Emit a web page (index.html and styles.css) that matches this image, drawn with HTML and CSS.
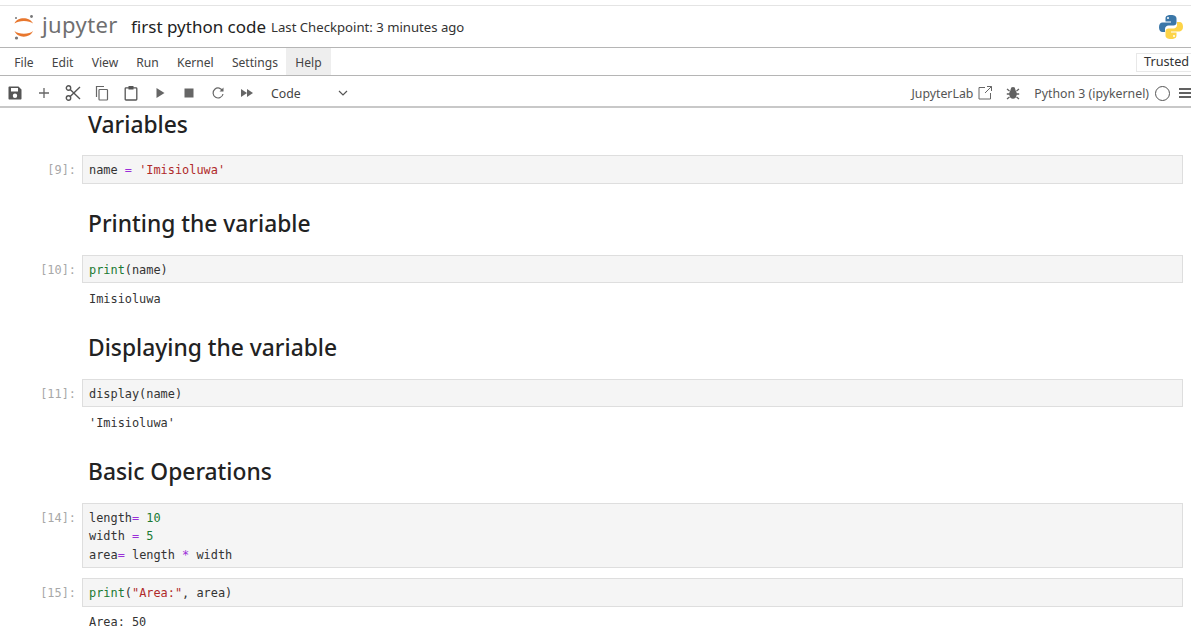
FILE: index.html
```html
<!DOCTYPE html>
<html lang="en">
<head>
<meta charset="utf-8">
<title>first python code - Jupyter Notebook</title>
<link rel="stylesheet" href="styles.css">
</head>
<body>
<header class="topbar">
  <div class="logo">
    <svg class="logo-mark" width="24" height="30" viewBox="0 0 24 30">
      <path d="M2.5 11.5C5 4.5 18 4.5 21 11.5C17.5 8 6.5 8 2.5 11.5Z" fill="#e8772e"/>
      <path d="M2.5 19C5.5 26.5 18 26.5 21 19C17.5 22.5 6.5 22.5 2.5 19Z" fill="#e8772e"/>
      <circle cx="19.5" cy="4.5" r="1.4" fill="#767677"/>
      <circle cx="4" cy="6" r="1" fill="#767677"/>
      <circle cx="4.5" cy="26" r="1.6" fill="#767677"/>
    </svg>
    <span class="logo-text">jupyter</span>
  </div>
  <span class="nb-title">first python code</span>
  <span class="checkpoint">Last Checkpoint: 3 minutes ago</span>
  <svg class="py-logo" width="26" height="26" viewBox="0 0 26 26">
    <path d="M12.8 1C8.5 1 7.5 2.7 7.5 4.5V7.5H13V8.5H4.5C2.3 8.5 1 10.5 1 13.2C1 16 2.3 18 4.5 18H7V15C7 13 8.7 11.5 10.5 11.5H15.5C17.2 11.5 18.5 10.2 18.5 8.5V4.5C18.5 2.5 16.8 1 12.8 1Z" fill="#3b77a8"/>
    <path d="M13.2 25C17.5 25 18.5 23.3 18.5 21.5V18.5H13V17.5H21.5C23.7 17.5 25 15.5 25 12.8C25 10 23.7 8 21.5 8H19V11C19 13 17.3 14.5 15.5 14.5H10.5C8.8 14.5 7.5 15.8 7.5 17.5V21.5C7.5 23.5 9.2 25 13.2 25Z" fill="#fdd448"/>
    <circle cx="10" cy="4" r="1" fill="#fff"/>
    <circle cx="16" cy="22" r="1" fill="#fff"/>
  </svg>
</header>
<nav class="menubar">
  <span class="menu-item">File</span>
  <span class="menu-item">Edit</span>
  <span class="menu-item">View</span>
  <span class="menu-item">Run</span>
  <span class="menu-item">Kernel</span>
  <span class="menu-item">Settings</span>
  <span class="menu-item active">Help</span>
  <span class="trusted">Trusted</span>
</nav>
<div class="toolbar">
  <svg class="tool" width="16" height="16" viewBox="0 0 16 16"><path d="M2.5 1.5H11.5L14.5 4.5V13.5C14.5 14.1 14.1 14.5 13.5 14.5H2.5C1.9 14.5 1.5 14.1 1.5 13.5V2.5C1.5 1.9 1.9 1.5 2.5 1.5ZM4 3V6.5H11V3ZM8 8.5A2.2 2.2 0 1 0 8 12.9A2.2 2.2 0 1 0 8 8.5Z" fill="#555" fill-rule="evenodd"/></svg>
  <svg class="tool" width="16" height="16" viewBox="0 0 16 16"><path d="M8 3V13M3 8H13" stroke="#666" stroke-width="1.3" fill="none"/></svg>
  <svg class="tool" width="16" height="16" viewBox="0 0 16 16"><g stroke="#555" stroke-width="1.4" fill="none"><circle cx="3.5" cy="3" r="2.2"/><circle cx="3.5" cy="13" r="2.2"/><path d="M5.2 4.5L15 14M5.2 11.5L15 2"/></g></svg>
  <svg class="tool" width="16" height="16" viewBox="0 0 16 16"><g stroke="#666" stroke-width="1.2" fill="none"><rect x="5" y="4.5" width="8.5" height="10.5" rx=".8"/><path d="M2.5 12V1.5H10"/></g></svg>
  <svg class="tool" width="16" height="16" viewBox="0 0 16 16"><rect x="2.2" y="2.8" width="11.6" height="12.2" rx=".8" stroke="#555" stroke-width="1.3" fill="none"/><rect x="5.5" y="1" width="5" height="3.5" fill="#555"/></svg>
  <svg class="tool" width="16" height="16" viewBox="0 0 16 16"><path d="M4.5 3L12.5 8L4.5 13Z" fill="#666"/></svg>
  <svg class="tool" width="16" height="16" viewBox="0 0 16 16"><rect x="3.5" y="3.5" width="9" height="9" fill="#666"/></svg>
  <svg class="tool" width="16" height="16" viewBox="0 0 16 16"><path d="M12.7 6A5 5 0 1 0 13 9" stroke="#666" stroke-width="1.2" fill="none"/><path d="M13.5 2.5V6.5H9.5Z" fill="#666"/></svg>
  <svg class="tool" width="16" height="16" viewBox="0 0 16 16"><path d="M2 4L8 8L2 12ZM8 4L14 8L8 12Z" fill="#666"/></svg>
  <span class="cell-type">Code
    <svg width="12" height="12" viewBox="0 0 12 12"><path d="M2 4L6 8L10 4" stroke="#555" stroke-width="1.2" fill="none"/></svg>
  </span>
  <span class="spacer"></span>
  <span class="lab-link">JupyterLab</span>
  <svg class="ext" width="16" height="16" viewBox="0 0 16 16"><path d="M8 2.5H2V14H13.5V8M10 1.5H14.5V6M14.5 1.5L8 8" stroke="#666" stroke-width="1" fill="none"/></svg>
  <svg class="bug" width="14" height="14" viewBox="0 0 14 14"><ellipse cx="7" cy="8" rx="3.8" ry="4.8" fill="#616161"/><circle cx="7" cy="3.2" r="2.3" fill="#616161"/><path d="M1 3L3.5 5M13 3L10.5 5M0.8 8H13.2M1 13L3.5 11M13 13L10.5 11" stroke="#616161" stroke-width="1.3"/></svg>
  <span class="kernel">Python 3 (ipykernel)</span>
  <span class="kernel-status"></span>
  <svg class="hamburger" width="12" height="12" viewBox="0 0 12 12"><path d="M0 1H12V3H0ZM0 5H12V7H0ZM0 9H12V11H0Z" fill="#616161"/></svg>
</div>
<main class="notebook">
  <h2 class="md first">Variables</h2>
  <div class="cell"><span class="prompt">[9]:</span><pre class="code"><span>name </span><span class="op">=</span> <span class="str">'Imisioluwa'</span></pre></div>
  <h2 class="md">Printing the variable</h2>
  <div class="cell"><span class="prompt">[10]:</span><pre class="code"><span class="bi">print</span>(name)</pre></div>
  <pre class="output">Imisioluwa</pre>
  <h2 class="md">Displaying the variable</h2>
  <div class="cell"><span class="prompt">[11]:</span><pre class="code">display(name)</pre></div>
  <pre class="output">'Imisioluwa'</pre>
  <h2 class="md">Basic Operations</h2>
  <div class="cell"><span class="prompt">[14]:</span><pre class="code">length<span class="op">=</span> <span class="num">10</span>
width <span class="op">=</span> <span class="num">5</span>
area<span class="op">=</span> length <span class="op">*</span> width</pre></div>
  <div class="cell next"><span class="prompt">[15]:</span><pre class="code"><span class="bi">print</span>(<span class="str">"Area:"</span>, area)</pre></div>
  <pre class="output">Area: 50</pre>
</main>
</body>
</html>
```
FILE: styles.css
```css
* { box-sizing: border-box; }
html, body { margin: 0; padding: 0; height: 100%; overflow: hidden; background: #fff; }
body { font-family: "Noto Sans", sans-serif; color: #333; }

.topbar {
  display: flex; align-items: center; height: 43px; margin-top: 5px;
  border-top: 1px solid #e4e4e4; border-bottom: 1px solid #b5b5b5;
  padding: 0 7px 0 12px;
}
.logo { display: flex; align-items: center; width: 119px; }
.logo-mark { flex: none; }
.logo-text { font-size: 22px; color: #6f6f70; margin-left: 6px; letter-spacing: 0.4px; position: relative; top: -3px; }
.nb-title { font-size: 17px; color: #222; }
.checkpoint { font-size: 13.15px; color: #333; margin-left: 5px; }
.py-logo { margin-left: auto; }

.menubar {
  display: flex; align-items: center; height: 28px;
  border-bottom: 1px solid #b5b5b5; padding: 0 0 0 7px;
  font-size: 12.1px; color: #444;
}
.menu-item { display: flex; align-items: center; height: 100%; padding: 1px 7.3px 0; margin-right: 3.6px; }
.menu-item.active { background: #eee; padding: 1px 9.5px 0; margin-left: -3px; }
.trusted {
  margin-left: auto; align-self: flex-start; margin-top: 5px; height: 19px; width: 55px; padding-left: 7px;
  border: 1px solid #e8e8e8; border-right: 0; font-size: 12.7px; color: #333; line-height: 14px; white-space: nowrap;
}

.toolbar {
  display: flex; align-items: center; height: 32px;
  border-bottom: 2px solid #c8c8c8; padding: 4px 0 0 7px;
  font-size: 12.3px; color: #555;
}
.tool { flex: none; margin-right: 13px; }
.cell-type { display: flex; align-items: center; justify-content: space-between; width: 78px; margin-left: 3px; color: #444; }
.spacer { flex: 1; }
.ext { margin-left: 4px; }
.bug { margin-left: 13px; }
.kernel { margin-left: 14px; }
.kernel-status { width: 15px; height: 15px; border: 1.3px solid #555; border-radius: 50%; margin-left: 6px; }
.hamburger { margin-left: 9px; margin-right: 0; }

.notebook { padding: 0 8px 0 0; }
.md {
  margin: 24.5px 0 14.5px; padding-left: 88px;
  font-size: 22.8px; font-weight: 500; color: #222; line-height: 32px;
}
.md.first { margin-top: 1px; margin-bottom: 14px; }
.output + .md { margin-top: 24px; }
.cell { display: flex; align-items: flex-start; }
.cell.next { margin-top: 10px; }
.prompt {
  width: 82px; flex: none; text-align: right; padding: 8px 6px 0 0;
  font: 11.9px/15px "DejaVu Sans Mono", monospace; color: #a8a8a8;
}
.code {
  flex: 1; margin: 0; background: #f5f5f5; border: 1px solid #dedede;
  padding: 5px 6px 3px; font: 11.9px/18.5px "DejaVu Sans Mono", monospace; color: #333;
}
.op { color: #9a2fd8; }
.str { color: #b02a2a; }
.bi { color: #1b7a33; }
.num { color: #1b7a33; }
.output { margin: 6.5px 0 0; padding: 0 0 0 89px; font: 11.9px/18.5px "DejaVu Sans Mono", monospace; color: #333; }
```
